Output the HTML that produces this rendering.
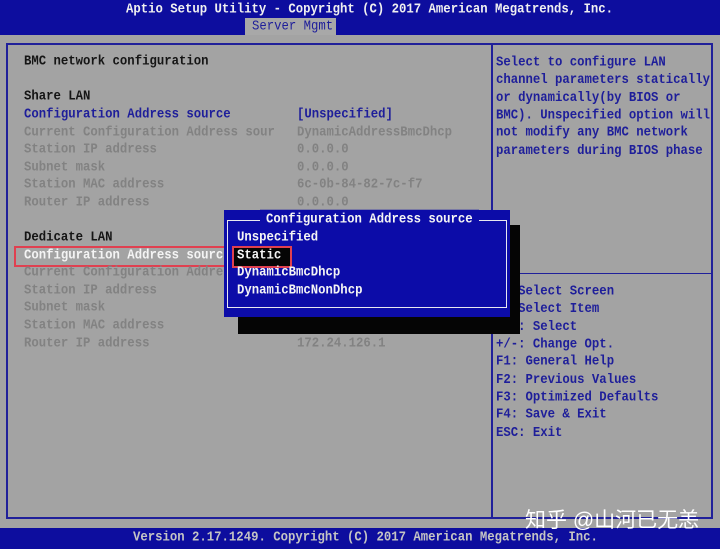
<!DOCTYPE html>
<html><head><meta charset="utf-8"><style>
body{margin:0;width:720px;height:549px;overflow:hidden;background:#a3a3a3;position:relative;font-family:"Liberation Mono",monospace;}
.t{position:absolute;font-size:12.3px;line-height:17px;white-space:pre;font-weight:bold;transform:scaleY(1.15);transform-origin:0 50%;}
.m{transform-origin:0 0;line-height:15.35px;}
.b{color:#1e1e9a}.d{color:#828282}.k{color:#151515}.w{color:#f4f4f4}
.abs{position:absolute}
</style></head><body>
<div class="abs" style="left:0;top:0;width:720px;height:35px;background:#0d0d9e"></div>
<div class="abs" style="left:245px;top:18px;width:91px;height:17px;background:#a8a8a8"></div>
<div class="t w" style="left:126px;top:1px;color:#f0f0f0">Aptio Setup Utility - Copyright (C) 2017 American Megatrends, Inc.</div>
<div class="t" style="left:252px;top:18px;color:#1e1e9a;font-weight:normal">Server Mgmt</div>
<!-- frame -->
<div class="abs" style="left:6px;top:43px;width:707px;height:476px;border:2px solid #20209a;box-sizing:border-box"></div>
<div class="abs" style="left:491px;top:43px;width:2px;height:476px;background:#20209a"></div>
<div class="abs" style="left:493px;top:273px;width:220px;height:1px;background:#20209a"></div>
<!-- left -->
<div class="t k" style="left:24px;top:53px">BMC network configuration</div>
<div class="t k" style="left:24px;top:88px">Share LAN</div>
<div class="t b" style="left:24px;top:106px">Configuration Address source</div>
<div class="t b" style="left:297px;top:106px">[Unspecified]</div>
<div class="t d" style="left:24px;top:124px">Current Configuration Address sour</div>
<div class="t d" style="left:297px;top:124px">DynamicAddressBmcDhcp</div>
<div class="t d" style="left:24px;top:141px">Station IP address</div>
<div class="t d" style="left:297px;top:141px">0.0.0.0</div>
<div class="t d" style="left:24px;top:159px">Subnet mask</div>
<div class="t d" style="left:297px;top:159px">0.0.0.0</div>
<div class="t d" style="left:24px;top:176px">Station MAC address</div>
<div class="t d" style="left:297px;top:176px">6c-0b-84-82-7c-f7</div>
<div class="t d" style="left:24px;top:194px">Router IP address</div>
<div class="t d" style="left:297px;top:194px">0.0.0.0</div>
<div class="t k" style="left:24px;top:229px">Dedicate LAN</div>
<div class="abs" style="left:14px;top:246px;width:212px;height:21px;border:2px solid #e04050;box-sizing:border-box"></div>
<div class="t w" style="left:24px;top:247px">Configuration Address sourc</div>
<div class="t d" style="left:24px;top:264px">Current Configuration Addre</div>
<div class="t d" style="left:24px;top:282px">Station IP address</div>
<div class="t d" style="left:24px;top:299px">Subnet mask</div>
<div class="t d" style="left:24px;top:317px">Station MAC address</div>
<div class="t d" style="left:24px;top:335px">Router IP address</div>
<div class="t d" style="left:297px;top:335px">172.24.126.1</div>
<!-- right help -->
<div class="t b m" style="left:496px;top:54px">Select to configure LAN
channel parameters statically
or dynamically(by BIOS or
BMC). Unspecified option will
not modify any BMC network
parameters during BIOS phase</div>
<div class="t b m" style="left:496px;top:283px">   Select Screen
   Select Item
  r: Select
+/-: Change Opt.
F1: General Help
F2: Previous Values
F3: Optimized Defaults
F4: Save &amp; Exit
ESC: Exit</div>
<!-- popup -->
<div class="abs" style="left:238px;top:225px;width:282px;height:109px;background:#050505"></div>
<div class="abs" style="left:224px;top:210px;width:286px;height:107px;background:#0c0ca8"></div>
<div class="abs" style="left:227px;top:220px;width:280px;height:88px;border:1px solid #e8e8f0;box-sizing:border-box"></div>
<div class="t w" style="left:260px;top:211px;background:#0c0ca8;padding:0 6px">Configuration Address source</div>
<div class="t w" style="left:237px;top:229px">Unspecified</div>
<div class="abs" style="left:234px;top:248px;width:56px;height:18px;background:#050505"></div>
<div class="abs" style="left:232px;top:246px;width:60px;height:22px;border:2px solid #e04050;box-sizing:border-box"></div>
<div class="t w" style="left:237px;top:247px">Static</div>
<div class="t w" style="left:237px;top:264px">DynamicBmcDhcp</div>
<div class="t w" style="left:237px;top:282px">DynamicBmcNonDhcp</div>
<!-- bottom -->
<div class="abs" style="left:0;top:528px;width:720px;height:21px;background:#0d0d9e"></div>
<div class="t" style="left:133px;top:529px;color:#c4c4c4">Version 2.17.1249. Copyright (C) 2017 American Megatrends, Inc.</div>
<div class="abs" style="left:525px;top:504px;font-family:'Liberation Sans','Noto Sans CJK SC',sans-serif;font-size:21px;color:#ffffff;white-space:nowrap">知乎 @山河已无恙</div>
</body></html>
